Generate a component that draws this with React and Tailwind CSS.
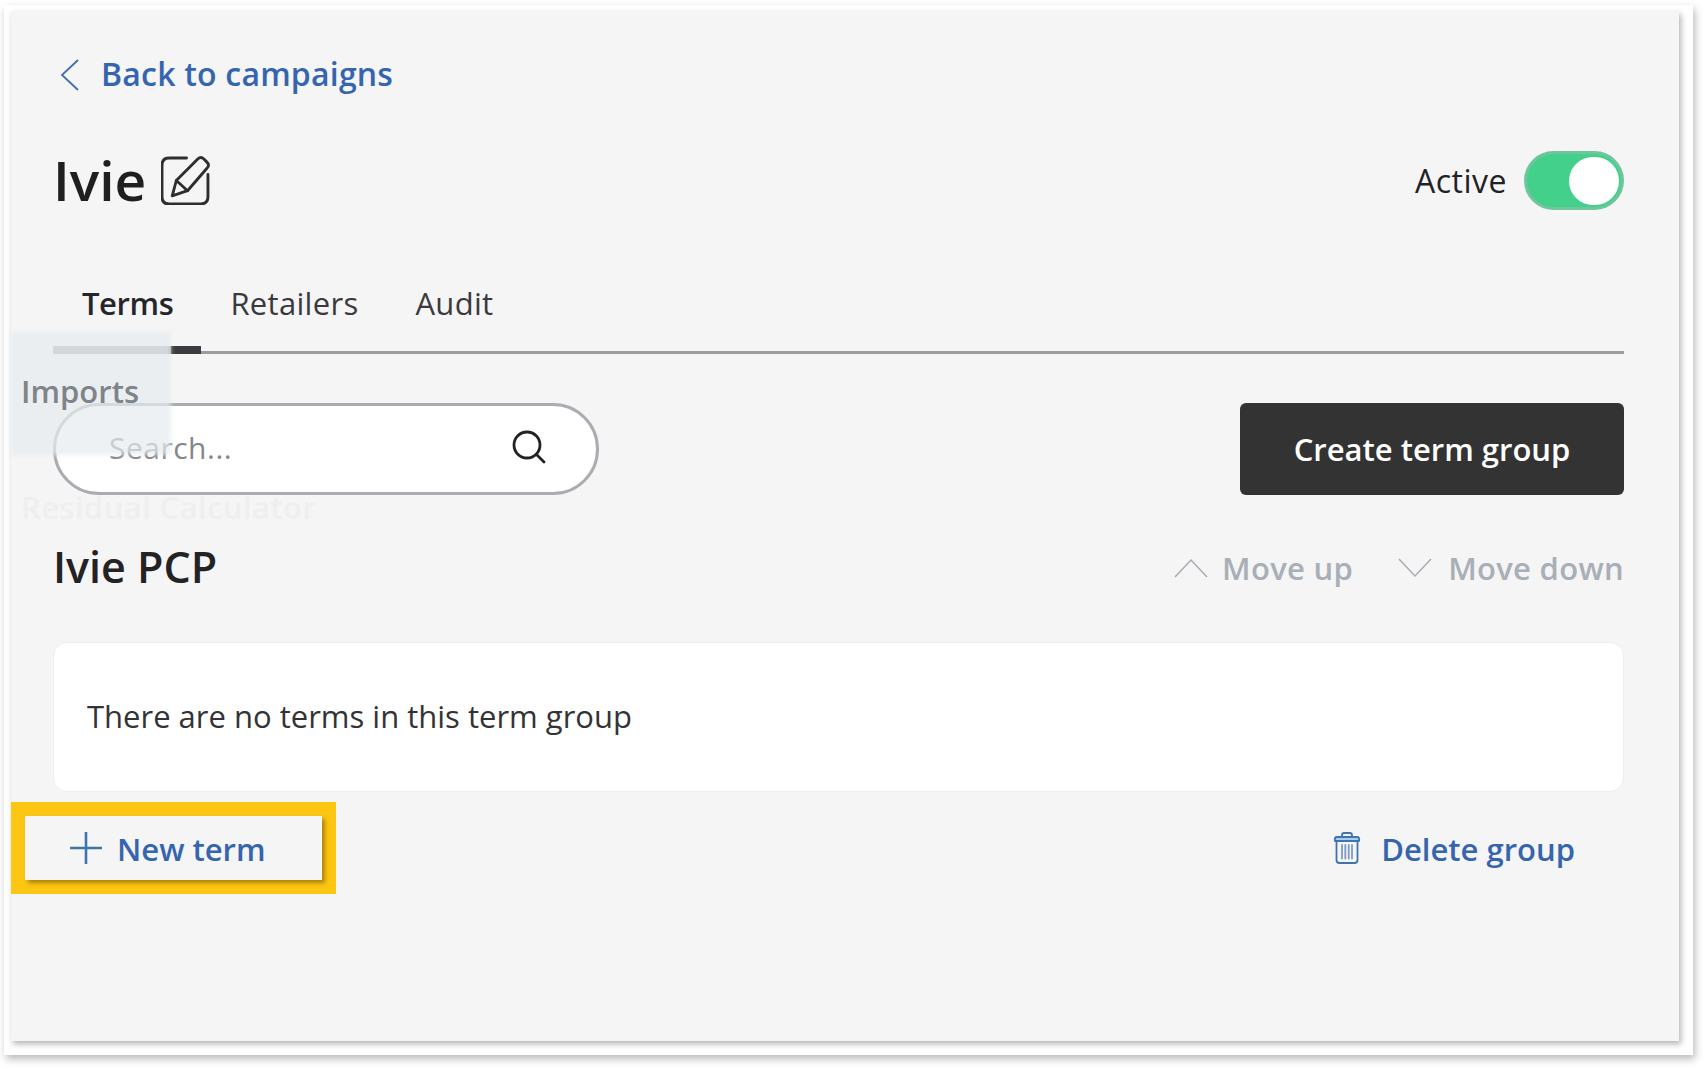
import React from 'react';

const FONT = "font-['Open_Sans','Lato',sans-serif]";

function EditIcon() {
  return (
    <svg width="49" height="49" viewBox="0 0 48 48" fill="none" stroke="#2e2e30" strokeWidth="2.8" strokeLinejoin="round" strokeLinecap="round">
      <path d="M25 2H8Q1 2 1 9V40Q1 47 8 47H39Q46 47 46 40V18" />
      <path d="M11 39L15 24L36 3Q39 0 42 3L45 6Q48 9 45 12L26 34Z" fill="#f5f5f5" />
      <path d="M15 24L26 34" />
    </svg>
  );
}

function TrashIcon() {
  return (
    <svg width="28" height="32" viewBox="0 0 28 32" fill="none" stroke="#3f74ad" strokeWidth="1.8" strokeLinejoin="round" strokeLinecap="round">
      <path d="M9 5V3Q9 1 11 1H17Q19 1 19 3V5" />
      <path d="M2 9Q1 5 4 5H24Q27 5 26 9Z" fill="#a9cdf0" />
      <path d="M3.5 9V28Q3.5 31 6.5 31H21.5Q24.5 31 24.5 28V9" />
      <path d="M9 13V26.5M12.3 13V26.5M15.7 13V26.5M19 13V26.5" stroke="#7d9cc4" />
    </svg>
  );
}

function Chevron({ d }) {
  return (
    <svg width="34" height="20" viewBox="0 0 34 20" fill="none" stroke="#a4abb3" strokeWidth="1.4">
      <path d={d} />
    </svg>
  );
}

export default function App() {
  return (
    <div className={`w-[1707px] h-[1069px] bg-white overflow-hidden pl-[4px] pt-[5px] ${FONT}`}>
      <div className="w-[1689px] h-[1050px] bg-white shadow-[2px_4px_8px_rgba(0,0,0,0.28)] pl-[7px] pt-[6px]">
        <div className="relative w-[1668px] h-[1030px] bg-[#f5f5f5] shadow-[2px_3px_6px_rgba(0,0,0,0.3)] pt-[44px]">
          <div className="pl-[42px] pr-[55px]">
            <a className="flex items-center h-[40px] text-[#3565ae] text-[32px] font-semibold tracking-[0.2px] leading-none">
              <svg className="ml-[7px] mr-[21px]" width="20" height="32" viewBox="0 0 20 32" fill="none" stroke="#3f6fb0" strokeWidth="1.8">
                <path d="M18 1L2 16L18 31" />
              </svg>
              <span className="-mt-[3px]">Back to campaigns</span>
            </a>

            <div className="mt-[56px] h-[59px] flex items-center justify-between">
              <div className="flex items-center gap-[15px]">
                <h1 className="text-[55px] font-semibold text-[#1f1f22] leading-none -mt-[2px]">Ivie</h1>
                <EditIcon />
              </div>
              <div className="flex items-center gap-[17px]">
                <span className="text-[32px] font-medium text-[#222226] tracking-[0.5px]">Active</span>
                <div className="w-[100px] h-[59px] rounded-full bg-[#43d08a] border-[3px] border-[#71c59e] flex items-center justify-end pr-[2px]">
                  <div className="w-[50px] h-[48px] rounded-full bg-white" />
                </div>
              </div>
            </div>

            <div className="mt-[73px] h-[40px] flex items-center gap-[57px] pl-[29px] text-[31px] text-[#3a3a3e]">
              <span className="font-semibold text-[#25252b] tracking-[-0.4px]">Terms</span>
              <span className="tracking-[0.3px]">Retailers</span>
              <span className="tracking-[0.3px]">Audit</span>
            </div>

            <div className="mt-[24px] h-[8px] flex items-end -translate-y-[1px]">
              <div className="w-[118px] h-[8px] bg-[#a5a8aa]" />
              <div className="w-[30px] h-[8px] bg-[#3b3c40]" />
              <div className="flex-1 h-[3px] bg-[#9a9da2]" />
            </div>

            <div className="mt-[48px] flex items-center justify-between">
              <div className="w-[546px] h-[92px] rounded-full border-[3px] border-[#a9adb1] bg-white flex items-center justify-between pl-[53px] pr-[50px] pb-[4px]">
                <span className="text-[30px] text-[#85878a] tracking-[0.5px]">Search...</span>
                <svg width="34" height="34" viewBox="0 0 34 34" fill="none" stroke="#222" strokeWidth="2.8" strokeLinecap="round">
                  <circle cx="15" cy="15" r="13" />
                  <path d="M24.5 24.5L32 32" />
                </svg>
              </div>
              <button className="w-[384px] h-[92px] rounded-[6px] bg-[#333333] text-white text-[31px] font-semibold">Create term group</button>
            </div>

            <div className="mt-[48px] h-[50px] flex items-center justify-between">
              <h2 className="text-[43px] font-semibold text-[#232326] -mt-[2px]">Ivie PCP</h2>
              <div className="flex items-center text-[31px] font-semibold text-[#a8afb7] tracking-[0.3px]">
                <Chevron d="M1 19L17 2L33 19" />
                <span className="ml-[14px]">Move up</span>
                <span className="ml-[45px]"><Chevron d="M1 1L17 18L33 1" /></span>
                <span className="ml-[16px]">Move down</span>
              </div>
            </div>

            <div className="mt-[49px] h-[150px] w-[1571px] rounded-[14px] bg-white border border-[#eeeeee] flex items-center pl-[33px] text-[31px] text-[#333336]">
              <span className="-mt-[2px]">There are no terms in this term group</span>
            </div>
          </div>

          <div className="mt-[10px] flex items-start justify-between pr-[104px]">
            <div className="w-[325px] h-[92px] bg-[#fdc613] p-[14px]">
              <div className="w-[297px] h-[64px] bg-[#f5f5f5] shadow-[3px_3px_4px_rgba(120,90,0,0.6)] flex items-center pl-[45px] gap-[15px] text-[#3565ae] text-[31px] font-semibold">
                <svg width="32" height="32" viewBox="0 0 32 32" fill="none" stroke="#3f74ad" strokeWidth="2.6">
                  <path d="M16 0V32M0 16H32" />
                </svg>
                <span className="mt-[2px]">New term</span>
              </div>
            </div>
            <div className="mt-[14px] h-[64px] flex items-center gap-[20px] text-[#3565ae] text-[31px] font-semibold">
              <TrashIcon />
              <span className="mt-[2px]">Delete group</span>
            </div>
          </div>

          {/* faded nav flyout bleeding through the screenshot */}
          <div className="absolute left-0 top-[321px] w-[160px] h-[123px] bg-[#e6ebf0]/70 blur-[2px]" />
          <span className="absolute left-[10px] top-[360px] text-[31px] font-semibold text-[#7e8488] leading-[40px]">Imports</span>
          <span className="absolute left-[10px] top-[476px] text-[31px] font-semibold text-[#efefef] leading-[40px] tracking-[0.4px]">Residual Calculator</span>
        </div>
      </div>
    </div>
  );
}
